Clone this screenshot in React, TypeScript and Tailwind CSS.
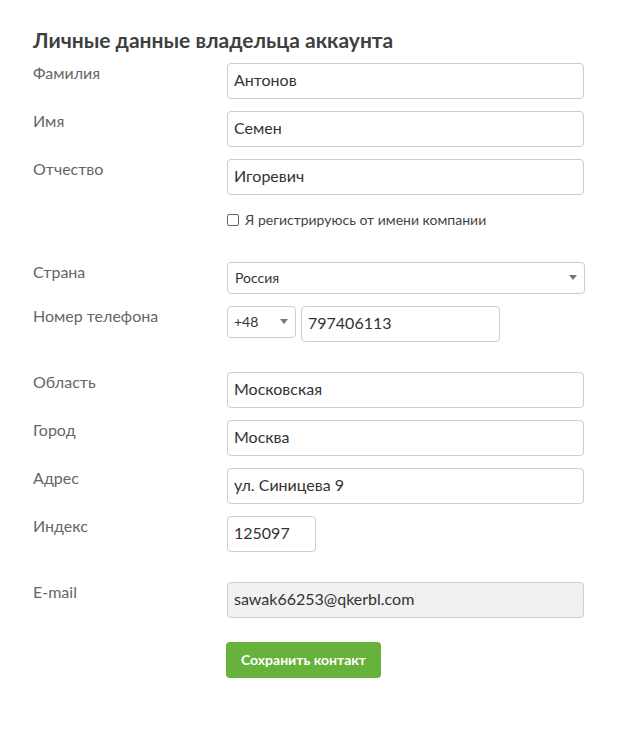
const FONT = "font-['Lato','Noto_Sans',sans-serif]";

function Field({
  label,
  value,
  width = "w-[357px]",
  disabled,
  className = "",
}: {
  label: string;
  value: string;
  width?: string;
  disabled?: boolean;
  className?: string;
}) {
  return (
    <div className={`flex ${className}`}>
      <label className="w-[194px] shrink-0 text-base leading-[19px] text-[#666]">
        {label}
      </label>
      <input
        readOnly
        defaultValue={value}
        disabled={disabled}
        className={`${width} h-9 rounded-[4px] border border-[#ccc] px-1.5 pb-[3px] text-base text-[#333] outline-none ${
          disabled ? "bg-[#f1f1f1]" : "bg-white"
        }`}
      />
    </div>
  );
}

function Caret() {
  return (
    <svg width="8" height="5" viewBox="0 0 8 5" className="shrink-0">
      <path d="M0 0h8L4 5z" fill="#777" />
    </svg>
  );
}

export default function App() {
  return (
    <div className={`${FONT} min-h-[730px] bg-white pl-[33px] pt-[27px]`}>
      <h1 className="text-[21px] font-bold leading-[26px] text-[#3f3f3f]">
        Личные данные владельца аккаунта
      </h1>

      <div className="mt-[10px] flex flex-col">
        <Field label="Фамилия" value="Антонов" />
        <Field label="Имя" value="Семен" className="mt-3" />
        <Field label="Отчество" value="Игоревич" className="mt-3" />

        <label className="ml-[194px] mt-[18px] flex items-center gap-[6px] text-sm leading-[13px] text-[#444]">
          <span className="h-3 w-3 rounded-[2px] border border-[#666] bg-white" />
          Я регистрируюсь от имени компании
        </label>

        <div className="mt-9 flex">
          <span className="w-[194px] shrink-0 text-base leading-[19px] text-[#666]">
            Страна
          </span>
          <div className="flex h-8 w-[358px] items-center justify-between rounded-[4px] border border-[#ccc] bg-white pb-px pl-[7px] pr-[7px] text-sm text-[#333]">
            Россия
            <Caret />
          </div>
        </div>

        <div className="mt-3 flex">
          <span className="w-[194px] shrink-0 text-base leading-[19px] text-[#666]">
            Номер телефона
          </span>
          <div className="flex gap-[5px]">
            <div className="flex h-8 w-[69px] items-center justify-between rounded-[4px] border border-[#ccc] bg-white pb-px pl-1.5 pr-[7px] text-sm text-[#333]">
              +48
              <Caret />
            </div>
            <input
              readOnly
              defaultValue="797406113"
              className="h-9 w-[199px] rounded-[4px] border border-[#ccc] bg-white px-1.5 pb-[3px] text-base text-[#333] outline-none"
            />
          </div>
        </div>

        <Field label="Область" value="Московская" className="mt-[30px]" />
        <Field label="Город" value="Москва" className="mt-3" />
        <Field label="Адрес" value="ул. Синицева 9" className="mt-3" />
        <Field label="Индекс" value="125097" width="w-[89px]" className="mt-3" />
        <Field
          label="E-mail"
          value="sawak66253@qkerbl.com"
          disabled
          className="mt-[30px]"
        />

        <div className="ml-[193px] mt-6">
          <button className="h-9 w-[155px] rounded-[4px] bg-[#67b23a] pb-px text-sm font-bold text-white">
            Сохранить контакт
          </button>
        </div>
      </div>
    </div>
  );
}
